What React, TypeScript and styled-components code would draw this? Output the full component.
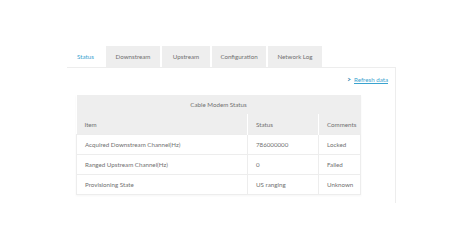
import styled, { createGlobalStyle } from 'styled-components';

const GlobalStyle = createGlobalStyle`
  html, body {
    margin: 0;
    padding: 0;
    background: #ffffff;
  }
  body {
    font-family: Lato, "Open Sans", "Liberation Sans", sans-serif;
  }
`;

const Page = styled.div`
  width: 474px;
  height: 247px;
  box-sizing: border-box;
  padding: 46px 0 0 67px;
  overflow: hidden;
`;

const TabBar = styled.div`
  display: flex;
  gap: 2px;
  height: 21px;
`;

const Tab = styled.div<{ $active?: boolean; $w: number }>`
  width: ${p => p.$w}px;
  display: flex;
  align-items: center;
  justify-content: center;
  font-size: 6.2px;
  color: ${p => (p.$active ? '#3aa3cf' : '#707070')};
  background: ${p => (p.$active ? '#ffffff' : '#eeeeee')};
`;

const Panel = styled.div`
  width: 329px;
  height: 136px;
  box-sizing: border-box;
  border-top: 1px solid #ededed;
  border-right: 1px solid #ededed;
  padding: 6px 0 0 9px;
`;

const RefreshRow = styled.div`
  display: flex;
  justify-content: flex-end;
  align-items: center;
  gap: 3px;
  padding-right: 7px;
  height: 11px;
  margin-bottom: 10px;
  font-size: 6.2px;
`;

const Chevron = styled.span`
  color: #2f7fb0;
  font-size: 6.5px;
  font-weight: 700;
`;

const RefreshLink = styled.a`
  color: #3aa3cf;
  text-decoration: underline;
`;

const Table = styled.table`
  width: 284px;
  table-layout: fixed;
  border-collapse: collapse;
  font-size: 6.2px;
  color: #707070;
  box-shadow: 0 1px 2px rgba(0, 0, 0, 0.04);
`;

const Col = styled.col<{ $w: number }>`
  width: ${p => p.$w}px;
`;

const TitleCell = styled.th`
  height: 19px;
  background: #eeeeee;
  font-weight: 400;
  text-align: center;
  padding: 0;
`;

const HeadCell = styled.th`
  height: 20px;
  background: #eeeeee;
  font-weight: 400;
  text-align: left;
  padding: 0 7px 0 8px;
  border-left: 1px solid #ffffff;
  white-space: nowrap;
  &:first-child {
    border-left: none;
  }
`;

const Cell = styled.td`
  height: 19px;
  padding: 0 7px 0 8px;
  text-align: left;
  border: 1px solid #ededed;
  white-space: nowrap;
`;

const tabs = [
  { label: 'Status', w: 37, active: true },
  { label: 'Downstream', w: 54 },
  { label: 'Upstream', w: 48 },
  { label: 'Configuration', w: 54 },
  { label: 'Network Log', w: 54 },
];

const rows = [
  ['Acquired Downstream Channel(Hz)', '786000000', 'Locked'],
  ['Ranged Upstream Channel(Hz)', '0', 'Failed'],
  ['Provisioning State', 'US ranging', 'Unknown'],
];

export default function App() {
  return (
    <>
      <GlobalStyle />
      <Page>
        <TabBar>
          {tabs.map(t => (
            <Tab key={t.label} $active={t.active} $w={t.w}>
              {t.label}
            </Tab>
          ))}
        </TabBar>
        <Panel>
          <RefreshRow>
            <Chevron>&gt;</Chevron>
            <RefreshLink>Refresh data</RefreshLink>
          </RefreshRow>
          <Table>
            <colgroup>
              <Col $w={171} />
              <Col $w={71} />
              <Col $w={42} />
            </colgroup>
            <thead>
              <tr>
                <TitleCell colSpan={3}>Cable Modem Status</TitleCell>
              </tr>
              <tr>
                <HeadCell>Item</HeadCell>
                <HeadCell>Status</HeadCell>
                <HeadCell>Comments</HeadCell>
              </tr>
            </thead>
            <tbody>
              {rows.map(r => (
                <tr key={r[0]}>
                  <Cell>{r[0]}</Cell>
                  <Cell>{r[1]}</Cell>
                  <Cell>{r[2]}</Cell>
                </tr>
              ))}
            </tbody>
          </Table>
        </Panel>
      </Page>
    </>
  );
}
